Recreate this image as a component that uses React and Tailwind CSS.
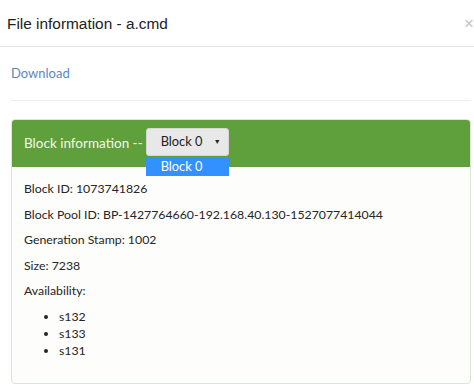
export default function App() {
  return (
    <div className="w-[474px] h-[387px] overflow-hidden bg-white text-[#262626]">
      <div className="w-[490px]">
        <div className="h-[47px] border-b border-[#e5e5e5] flex items-center justify-between pl-[7px] pr-[16px]">
          <h4 className="text-[15.4px] font-['Liberation_Sans',Arial,sans-serif] text-[#222] leading-none pt-[2px]">
            File information - a.cmd
          </h4>
          <span className="text-[#c4c4c4] text-[17px] leading-none font-['Liberation_Sans',sans-serif]">×</span>
        </div>
      </div>
      <div className="px-[11px] pr-[3px] font-['Lato',sans-serif] text-[12.3px]">
        <div className="pt-[14px] pb-[15px] border-b border-[#eee]">
          <a href="#" className="text-[#5b88bd] text-[13px] leading-[24px]">Download</a>
        </div>
        <div className="mt-[18px] border border-[#dde6d5] rounded-[4px] bg-[#fdfdfb] h-[265px]">
          <div className="relative bg-[#5fa03c] rounded-t-[3px] h-[47px] flex items-center pl-[12px] gap-[3px]">
            <span className="text-[#f2f8ec] text-[13.5px]">Block information --</span>
            <div className="relative mt-[-4px]">
              <div className="w-[83px] h-[28px] rounded-[3px] bg-[#e8e8e8] border border-[#d6d6d6] flex items-center justify-between pl-[14px] pr-[7px] text-[#222] text-[12.8px]">
                <span>Block 0</span>
                <span className="text-[7px]">▼</span>
              </div>
              <div className="absolute left-0 top-[30px] w-[83px] h-[18px] bg-[#3390ff] text-white flex items-center pl-[15px] text-[12.8px] leading-none">
                Block 0
              </div>
            </div>
          </div>
          <div className="px-[12px] pt-[13px] leading-[17px]">
            <p className="mb-[8.5px]">Block ID: 1073741826</p>
            <p className="mb-[8.5px]">Block Pool ID: BP-1427764660-192.168.40.130-1527077414044</p>
            <p className="mb-[8.5px]">Generation Stamp: 1002</p>
            <p className="mb-[8.5px]">Size: 7238</p>
            <p className="mb-[8.5px]">Availability:</p>
            <ul className="list-disc pl-[35px]">
              <li>s132</li>
              <li>s133</li>
              <li>s131</li>
            </ul>
          </div>
        </div>
      </div>
    </div>
  );
}
